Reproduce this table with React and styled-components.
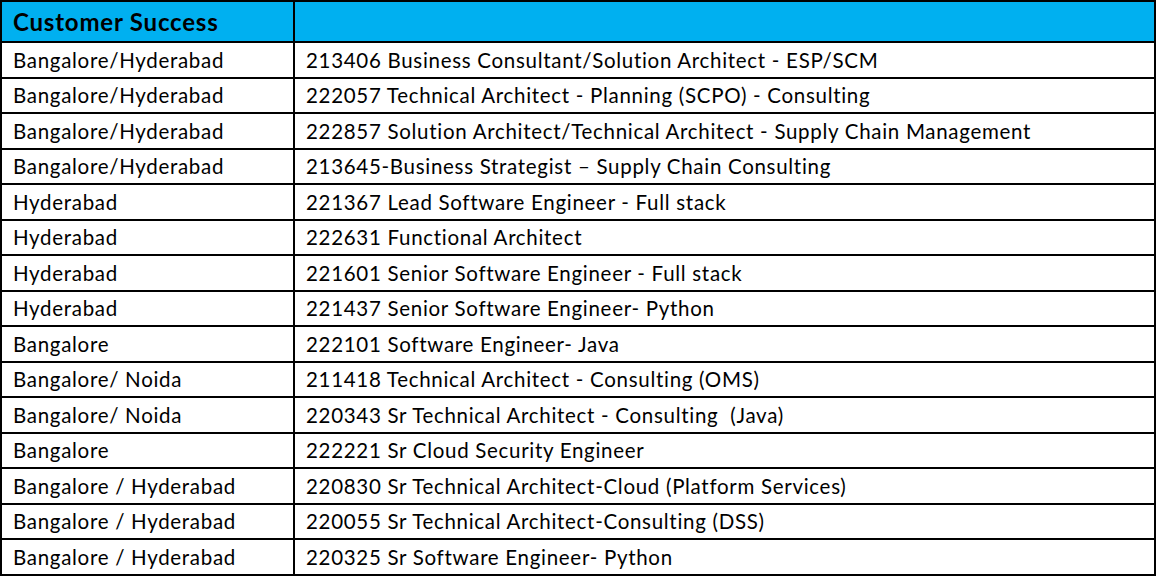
import React from "react";
import styled, { createGlobalStyle } from "styled-components";

const GlobalStyle = createGlobalStyle`
  html, body {
    margin: 0;
    padding: 0;
    background: #ffffff;
  }
  body {
    font-family: Lato, "Open Sans", "Liberation Sans", sans-serif;
    color: #000000;
    font-variant-ligatures: none;
  }
`;

const Sheet = styled.div`
  width: 1158px;
  padding: 0 2px 0 0;
  box-sizing: border-box;
`;

const Table = styled.table`
  width: 1156px;
  border-collapse: collapse;
  table-layout: fixed;
  border-top: 1px solid #000;
`;

const Cell = styled.td`
  border: 2px solid #000;
  padding: 0 0 0 11px;
  height: ${(p) => (p.$head ? "39px" : "33.5px")};
  font-size: ${(p) => (p.$head ? "24px" : "20.5px")};
  letter-spacing: ${(p) => (p.$head ? "0.8px" : "0.7px")};
  font-weight: ${(p) => (p.$head ? 700 : 400)};
  background: ${(p) => (p.$head ? "#00b0f0" : "#ffffff")};
  white-space: pre;
  vertical-align: middle;
  line-height: 1;
`;

const rows = [
  ["Bangalore/Hyderabad", "213406 Business Consultant/Solution Architect - ESP/SCM"],
  ["Bangalore/Hyderabad", "222057 Technical Architect - Planning (SCPO) - Consulting"],
  ["Bangalore/Hyderabad", "222857 Solution Architect/Technical Architect - Supply Chain Management"],
  ["Bangalore/Hyderabad", "213645-Business Strategist \u2013 Supply Chain Consulting"],
  ["Hyderabad", "221367 Lead Software Engineer - Full stack"],
  ["Hyderabad", "222631 Functional Architect"],
  ["Hyderabad", "221601 Senior Software Engineer - Full stack"],
  ["Hyderabad", "221437 Senior Software Engineer- Python"],
  ["Bangalore", "222101 Software Engineer- Java"],
  ["Bangalore/ Noida", "211418 Technical Architect - Consulting (OMS)"],
  ["Bangalore/ Noida", "220343 Sr Technical Architect - Consulting  (Java)"],
  ["Bangalore", "222221 Sr Cloud Security Engineer"],
  ["Bangalore / Hyderabad", "220830 Sr Technical Architect-Cloud (Platform Services)"],
  ["Bangalore / Hyderabad", "220055 Sr Technical Architect-Consulting (DSS)"],
  ["Bangalore / Hyderabad", "220325 Sr Software Engineer- Python"],
];

const App = () => {
  return (
    <>
      <GlobalStyle />
      <Sheet>
        <Table>
          <colgroup>
            <col style={{ width: "293px" }} />
            <col />
          </colgroup>
          <tbody>
            <tr>
              <Cell $head>Customer Success</Cell>
              <Cell $head></Cell>
            </tr>
            {rows.map(([place, role], i) => (
              <tr key={i}>
                <Cell>{place}</Cell>
                <Cell>{role}</Cell>
              </tr>
            ))}
          </tbody>
        </Table>
      </Sheet>
    </>
  );
};

export default App;
